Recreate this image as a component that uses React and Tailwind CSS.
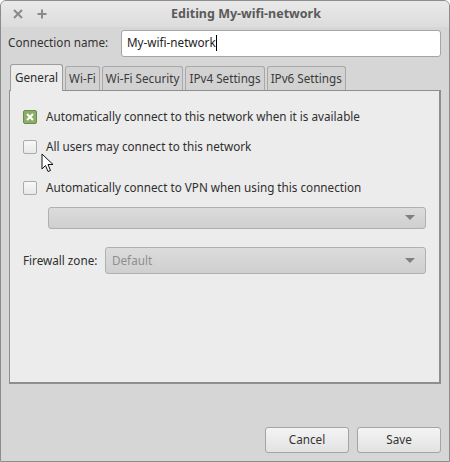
const font = { fontFamily: '"Noto Sans", "Open Sans", sans-serif' }

function Check({ checked }) {
  return checked ? (
    <span className="w-[14px] h-[14px] rounded-[2px] border border-[#6d8a4e] bg-[#8cad65] flex items-center justify-center shrink-0">
      <svg width="8" height="8" viewBox="0 0 8 8">
        <path d="M1 1 L7 7 M7 1 L1 7" stroke="#fff" strokeWidth="2" />
      </svg>
    </span>
  ) : (
    <span className="w-[14px] h-[14px] rounded-[2px] border border-[#ababab] bg-gradient-to-b from-[#f8f8f8] to-[#e8e8e8] shrink-0" />
  )
}

function Combo({ className, text }) {
  return (
    <div className={`flex items-center rounded-[3px] border border-[#b0b0b0] bg-gradient-to-b from-[#dcdcdc] to-[#cfcfcf] pl-[6px] pr-[10px] text-[#8f8f8f] ${className}`}>
      <span className="flex-1">{text}</span>
      <svg width="10" height="6" viewBox="0 0 10 6"><path d="M0 0 H10 L5 5 Z" fill="#808080" /></svg>
    </div>
  )
}

const tabs = ['General', 'Wi-Fi', 'Wi-Fi Security', 'IPv4 Settings', 'IPv6 Settings']

export default function App() {
  return (
    <div style={font} className="w-[450px] h-[462px] bg-white text-[11.7px] text-[#3c3c3c]">
      <div className="relative w-[450px] h-[462px] flex flex-col rounded-t-[6px] border border-[#8c8c8c] bg-[#d6d6d6] overflow-hidden">
        {/* title bar */}
        <div className="h-[26px] flex items-center bg-gradient-to-b from-[#e9e9e9] to-[#dcdcdc] relative shrink-0">
          <div className="flex items-center gap-[14px] pl-[12px]">
            <svg width="10" height="10" viewBox="0 0 10 10"><path d="M1 1 L9 9 M9 1 L1 9" stroke="#8a8a8a" strokeWidth="2" /></svg>
            <svg width="10" height="10" viewBox="0 0 10 10"><path d="M5 0.5 V9.5 M0.5 5 H9.5" stroke="#8a8a8a" strokeWidth="2" /></svg>
          </div>
          <div className="absolute inset-0 flex items-center justify-center pl-[42px] font-bold text-[12.5px] text-[#5a5a5a]">Editing My-wifi-network</div>
        </div>

        {/* connection name */}
        <div className="flex items-center pl-[7px] pr-[8px] pt-[2px] h-[30px]">
          <span className="w-[113px] text-[#333]">Connection name:</span>
          <div className="flex-1 h-[27px] rounded-[3px] border border-[#a5a5a5] bg-white flex items-center pl-[5px] text-[#222]">
            My-wifi-network<span className="w-px h-[16px] bg-black" />
          </div>
        </div>

        {/* tabs */}
        <div className="flex items-end gap-[2px] pl-[9px] mt-[6px] h-[27px]">
          {tabs.map((t, i) => (
            <div
              key={t}
              className={
                i === 0
                  ? 'h-[27px] px-[4px] flex items-center rounded-t-[3px] border border-b-0 border-[#9c9c9c] bg-[#ececec] text-[#2e2e2e] relative z-10 -mb-px'
                  : 'h-[24px] px-[3px] flex items-center rounded-t-[3px] border border-b-0 border-[#a8a8a8] bg-[#d2d2d2] text-[#3a3a3a]'
              }
            >
              {t}
            </div>
          ))}
        </div>

        {/* notebook */}
        <div className="mx-[8px] h-[294px] border border-[#8e8e8e] border-b-2 border-r-2 bg-[#ececec] flex flex-col pl-[13px] pr-[13px]">
          <div className="flex items-center gap-[9px] mt-[18px] h-[16px]">
            <Check checked />
            <span className="text-[#2f2f2f]">Automatically connect to this network when it is available</span>
          </div>
          <div className="flex items-center gap-[9px] mt-[14px] h-[16px]">
            <Check />
            <span className="text-[#2f2f2f]">All users may connect to this network</span>
          </div>
          <div className="flex items-center gap-[9px] mt-[25px] h-[16px]">
            <Check />
            <span className="text-[#2f2f2f]">Automatically connect to VPN when using this connection</span>
          </div>
          <Combo className="ml-[25px] mt-[11px] h-[22px]" text="" />
          <div className="flex items-center mt-[18px] h-[27px]">
            <span className="w-[82px] text-[#2f2f2f]">Firewall zone:</span>
            <Combo className="flex-1 h-[27px]" text="Default" />
          </div>
        </div>

        {/* buttons */}
        <div className="flex justify-end gap-[8px] pr-[8px] mt-[43px]">
          <button className="w-[84px] h-[26px] rounded-[3px] border border-[#a4a4a4] bg-gradient-to-b from-[#f4f4f4] to-[#e2e2e2] text-[#333]">Cancel</button>
          <button className="w-[84px] h-[26px] rounded-[3px] border border-[#a4a4a4] bg-gradient-to-b from-[#f4f4f4] to-[#e2e2e2] text-[#333]">Save</button>
        </div>

        {/* mouse pointer */}
        <svg className="absolute left-[40px] top-[152px]" width="13" height="20" viewBox="0 0 13 20">
          <path d="M1 1 V16 L4.5 12.5 L7 18.5 L9.5 17.5 L7 11.5 L12 11.5 Z" fill="#fff" stroke="#111" strokeWidth="1" strokeLinejoin="round" />
        </svg>
      </div>
    </div>
  )
}
